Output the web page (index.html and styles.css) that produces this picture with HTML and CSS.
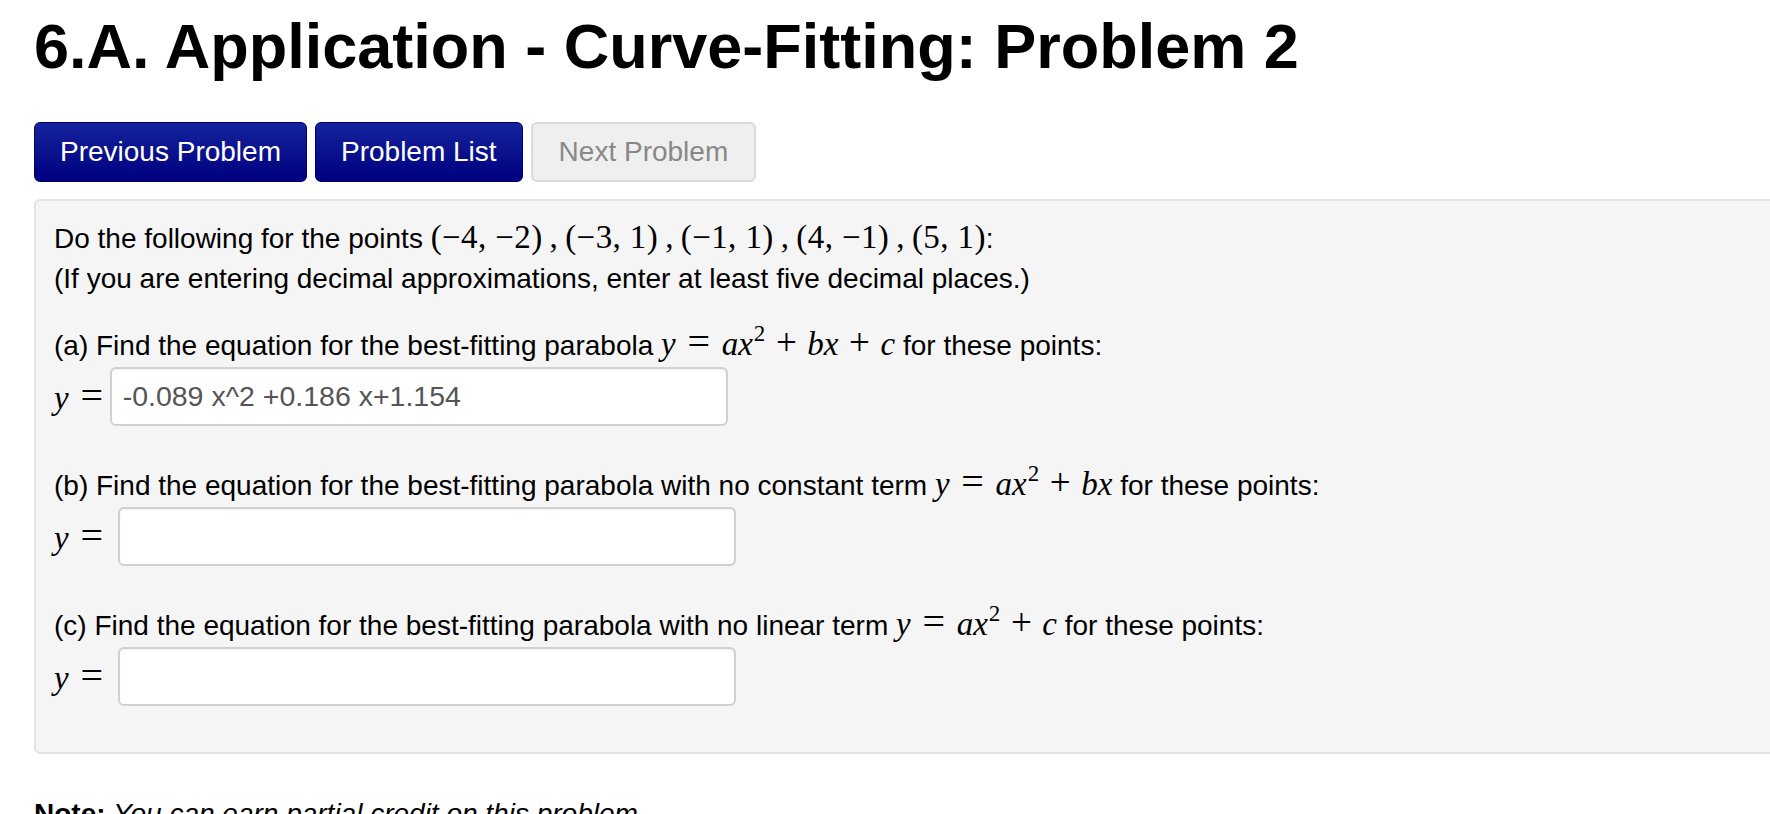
FILE: index.html
```html
<!DOCTYPE html>
<html lang="en">
<head>
  <meta charset="UTF-8" />
  <title>6.A. Application - Curve-Fitting: Problem 2</title>
  <link rel="stylesheet" href="styles.css">
</head>
<body>
  <h1>6.A. Application - Curve-Fitting: Problem 2</h1>

  <div class="problem-nav">
    <a class="nav-button" href="#">Previous Problem</a>
    <a class="nav-button" href="#">Problem List</a>
    <span class="nav-button disabled">Next Problem</span>
  </div>

  <div class="problem-box">
    <p class="intro">
      Do the following for the points <span class="math points">(−4, −2)&thinsp;,&thinsp;(−3, 1)&thinsp;,&thinsp;(−1, 1)&thinsp;,&thinsp;(4, −1)&thinsp;,&thinsp;(5, 1)</span>:<br />
      (If you are entering decimal approximations, enter at least five decimal places.)
    </p>

    <div class="part">
      <p class="question">(a) Find the equation for the best-fitting parabola <span class="math"><i>y</i><span class="rel">=</span><i>ax</i><sup>2</sup><span class="bin">+</span><i>bx</i><span class="bin">+</span><i>c</i></span> for these points:</p>
      <div class="answer-row">
        <span class="math label"><i>y</i><span class="rel">=</span></span>
        <input class="answer first" type="text" value="-0.089 x^2 +0.186 x+1.154" />
      </div>
    </div>

    <div class="part">
      <p class="question">(b) Find the equation for the best-fitting parabola with no constant term <span class="math"><i>y</i><span class="rel">=</span><i>ax</i><sup>2</sup><span class="bin">+</span><i>bx</i></span> for these points:</p>
      <div class="answer-row">
        <span class="math label"><i>y</i><span class="rel">=</span></span>
        <input class="answer" type="text" value="" />
      </div>
    </div>

    <div class="part">
      <p class="question">(c) Find the equation for the best-fitting parabola with no linear term <span class="math"><i>y</i><span class="rel">=</span><i>ax</i><sup>2</sup><span class="bin">+</span><i>c</i></span> for these points:</p>
      <div class="answer-row">
        <span class="math label"><i>y</i><span class="rel">=</span></span>
        <input class="answer" type="text" value="" />
      </div>
    </div>
  </div>

  <p class="note"><strong>Note:</strong> <em>You can earn partial credit on this problem.</em></p>
</body>
</html>
```

FILE: styles.css
```css
body {
  font-family: "Liberation Sans", Arial, sans-serif;
  font-size: 28px;
  line-height: 40px;
  color: #000;
  margin: 0;
  padding: 0 0 0 34px;
  overflow: hidden;
}

h1 {
  font-size: 63px;
  line-height: 69px;
  font-weight: bold;
  margin: 12px 0 0;
}

.problem-nav {
  display: flex;
  gap: 8px;
  margin-top: 41px;
}

.nav-button {
  display: inline-block;
  padding: 9px 25px;
  line-height: 40px;
  color: #fff;
  text-decoration: none;
  background: linear-gradient(#14239b, #00007f);
  border: 1px solid #00006e;
  border-radius: 6px;
}

.nav-button.disabled {
  color: #888;
  background: #efefef;
  border: 2px solid #dadada;
  padding: 8px 26px;
}

.problem-box {
  margin: 17px -80px 0 0;
  background-color: #f5f5f5;
  border: 2px solid #e3e3e3;
  border-radius: 6px;
  padding: 18px 18px 46px;
}

p {
  margin: 0;
}

.intro {
  margin-bottom: 27px;
}

.part + .part {
  margin-top: 40px;
}

.answer-row {
  display: flex;
  align-items: center;
  margin-top: 1px;
}

.answer {
  width: 618px;
  height: 59px;
  box-sizing: border-box;
  margin-left: 13px;
  padding: 0 11px;
  font-family: "Liberation Sans", Arial, sans-serif;
  font-size: 28.5px;
  color: #555;
  background: #fff;
  border: 2px solid #d0d0d0;
  border-radius: 6px;
  box-shadow: inset 0 1px 2px rgba(0, 0, 0, 0.06);
}

.answer.first {
  margin-left: 5px;
}

/* math set in a Times-like face */
.math {
  font-family: "Liberation Serif", "Times New Roman", serif;
  font-size: 33px;
  line-height: 20px;
}

.math.points {
  letter-spacing: 0.4px;
}

.math i {
  font-style: italic;
}

.math sup {
  font-size: 23px;
  line-height: 0;
  vertical-align: 14px;
  margin-left: 1px;
}

.math .rel,
.math .bin {
  display: inline-block;
  width: 26px;
  text-align: center;
}

.math .rel {
  font-size: 40px;
  margin: 0 10px;
}

.math .bin {
  font-size: 37px;
  margin: 0 8px;
}

.label .rel {
  margin-right: 0;
}

.note {
  margin-top: 40px;
}

.note em {
  font-style: italic;
}
```
